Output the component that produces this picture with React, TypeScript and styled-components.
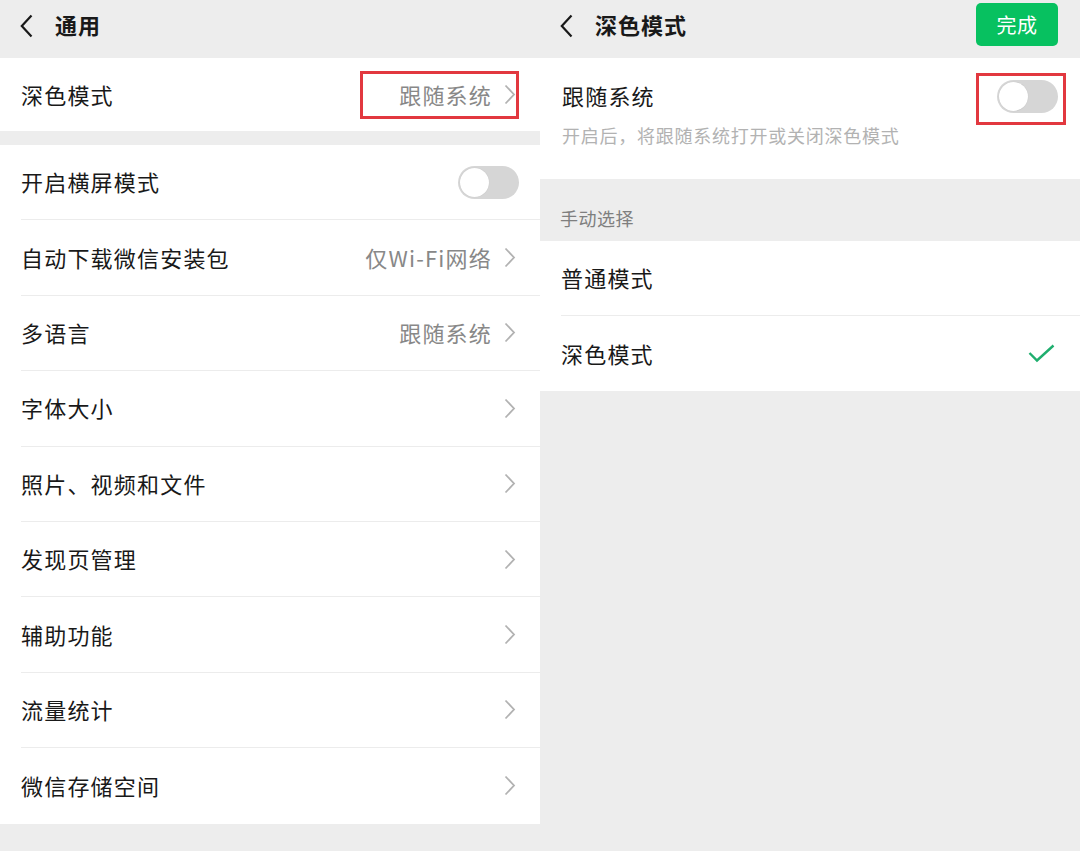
import React from 'react';
import styled, { createGlobalStyle } from 'styled-components';

const GlobalStyle = createGlobalStyle`
  html, body {
    margin: 0;
    padding: 0;
    background: #ededed;
  }
  body {
    font-family: "Noto Sans CJK SC", "Noto Sans", sans-serif;
    color: #191919;
    -webkit-font-smoothing: antialiased;
  }
  * {
    box-sizing: border-box;
  }
`;

const COLORS = {
  BG: '#ededed',
  WHITE: '#ffffff',
  TEXT: '#191919',
  VALUE: '#888888',
  HINT: '#b2b2b2',
  LABEL: '#7f7f7f',
  DIVIDER: '#ececec',
  GREEN: '#07c160',
  CHECK: '#1fae6e',
  RED: '#e2383f',
};

const Page = styled.div`
  display: flex;
  width: 1080px;
  height: 851px;
  overflow: hidden;
`;

const Pane = styled.div`
  width: 540px;
  height: 851px;
  background: ${COLORS.BG};
  display: flex;
  flex-direction: column;
`;

const NavBar = styled.div`
  height: 58px;
  display: flex;
  align-items: center;
  padding: 0 22px 10px 20px;
`;

const BackButton = styled.div`
  width: 13px;
  height: 24px;
  display: flex;
  align-items: center;
  margin: 4px 22px 0 0;
`;

const NavTitle = styled.div`
  font-size: 22px;
  font-weight: 700;
  flex: 1;
  letter-spacing: 1px;
`;

const DoneButton = styled.div`
  width: 82px;
  height: 43px;
  margin-top: 1px;
  border-radius: 5px;
  background: ${COLORS.GREEN};
  color: ${COLORS.WHITE};
  font-size: 20px;
  letter-spacing: 0.5px;
  display: flex;
  align-items: center;
  justify-content: center;
`;

const Group = styled.div<{ gapAfter?: number }>`
  background: ${COLORS.WHITE};
  margin-bottom: ${props => props.gapAfter ?? 0}px;
`;

const Row = styled.div<{ height: number }>`
  display: flex;
  padding-left: 21px;
  height: ${props => props.height}px;
`;

const RowBody = styled.div<{ divider?: boolean }>`
  flex: 1;
  display: flex;
  align-items: center;
  padding-right: 24px;
  border-bottom: ${props => (props.divider ? `1px solid ${COLORS.DIVIDER}` : 'none')};
`;

const Label = styled.div`
  flex: 1;
  font-size: 22px;
  letter-spacing: 1.2px;
  padding-bottom: 2px;
`;

const Value = styled.div`
  font-size: 22px;
  color: ${COLORS.VALUE};
  margin-right: 12px;
  letter-spacing: 1.2px;
  padding-bottom: 2px;
`;

const Trailing = styled.div`
  position: relative;
  display: flex;
  align-items: center;
`;

const Highlight = styled.div<{ top: number; right: number; bottom: number; left: number }>`
  position: absolute;
  top: ${props => -props.top}px;
  right: ${props => -props.right}px;
  bottom: ${props => -props.bottom}px;
  left: ${props => -props.left}px;
  border: 3px solid ${COLORS.RED};
  pointer-events: none;
`;

const SwitchTrack = styled.div`
  width: 61px;
  height: 33px;
  border-radius: 17px;
  background: #d6d6d6;
  padding: 2px;
  display: flex;
  align-items: center;
`;

const SwitchKnob = styled.div`
  width: 29px;
  height: 29px;
  border-radius: 50%;
  background: ${COLORS.WHITE};
  box-shadow: 0 0 1px rgba(0, 0, 0, 0.15);
`;

const FollowSection = styled.div`
  background: ${COLORS.WHITE};
  padding: 20px 22px 31px 22px;
`;

const FollowHead = styled.div`
  display: flex;
  align-items: center;
  height: 36px;
`;

const Hint = styled.div`
  margin-top: 8px;
  font-size: 18px;
  line-height: 26px;
  color: ${COLORS.HINT};
  letter-spacing: 0.75px;
`;

const SectionLabel = styled.div`
  height: 62px;
  padding: 26px 0 0 20px;
  font-size: 18px;
  line-height: 26px;
  color: ${COLORS.LABEL};
  letter-spacing: 0.5px;
`;

const Chevron = () => (
  <svg width="12" height="21" viewBox="0 0 12 21">
    <polyline points="1.5,1.5 10,10.5 1.5,19.5" fill="none" stroke={COLORS.HINT} strokeWidth="1.8" />
  </svg>
);

const BackIcon = () => (
  <svg width="13" height="24" viewBox="0 0 13 24">
    <polyline points="11.5,1.5 1.8,12 11.5,22.5" fill="none" stroke={COLORS.TEXT} strokeWidth="2.2" />
  </svg>
);

const CheckIcon = () => (
  <svg width="27" height="19" viewBox="0 0 27 19">
    <polyline points="1.5,9 9,16.5 25.5,1.5" fill="none" stroke={COLORS.CHECK} strokeWidth="2.4" />
  </svg>
);

const Switch = () => (
  <SwitchTrack>
    <SwitchKnob />
  </SwitchTrack>
);

type Item = { label: string; value?: string; toggle?: boolean };

const GENERAL_ITEMS: Item[] = [
  { label: '开启横屏模式', toggle: true },
  { label: '自动下载微信安装包', value: '仅Wi-Fi网络' },
  { label: '多语言', value: '跟随系统' },
  { label: '字体大小' },
  { label: '照片、视频和文件' },
  { label: '发现页管理' },
  { label: '辅助功能' },
  { label: '流量统计' },
  { label: '微信存储空间' },
];

function GeneralPane() {
  return (
    <Pane>
      <NavBar>
        <BackButton>
          <BackIcon />
        </BackButton>
        <NavTitle>通用</NavTitle>
      </NavBar>
      <Group gapAfter={14}>
        <Row height={73}>
          <RowBody>
            <Label>深色模式</Label>
            <Trailing>
              <Value>跟随系统</Value>
              <Chevron />
              <Highlight top={7} right={3} bottom={7} left={39} />
            </Trailing>
          </RowBody>
        </Row>
      </Group>
      <Group>
        {GENERAL_ITEMS.map((item, i) => (
          <Row key={item.label} height={75.4}>
            <RowBody divider={i < GENERAL_ITEMS.length - 1} style={item.toggle ? { paddingRight: 21 } : undefined}>
              <Label>{item.label}</Label>
              {item.value && <Value>{item.value}</Value>}
              {item.toggle ? <Switch /> : <Chevron />}
            </RowBody>
          </Row>
        ))}
      </Group>
    </Pane>
  );
}

function DarkModePane() {
  return (
    <Pane>
      <NavBar>
        <BackButton>
          <BackIcon />
        </BackButton>
        <NavTitle>深色模式</NavTitle>
        <DoneButton>完成</DoneButton>
      </NavBar>
      <FollowSection>
        <FollowHead>
          <Label>跟随系统</Label>
          <Trailing>
            <Switch />
            <Highlight top={7} right={8} bottom={12} left={21} />
          </Trailing>
        </FollowHead>
        <Hint>开启后，将跟随系统打开或关闭深色模式</Hint>
      </FollowSection>
      <SectionLabel>手动选择</SectionLabel>
      <Group>
        <Row height={75}>
          <RowBody divider>
            <Label>普通模式</Label>
          </RowBody>
        </Row>
        <Row height={75}>
          <RowBody style={{ paddingRight: 25 }}>
            <Label>深色模式</Label>
            <CheckIcon />
          </RowBody>
        </Row>
      </Group>
    </Pane>
  );
}

export default function App() {
  return (
    <>
      <GlobalStyle />
      <Page>
        <GeneralPane />
        <DarkModePane />
      </Page>
    </>
  );
}
